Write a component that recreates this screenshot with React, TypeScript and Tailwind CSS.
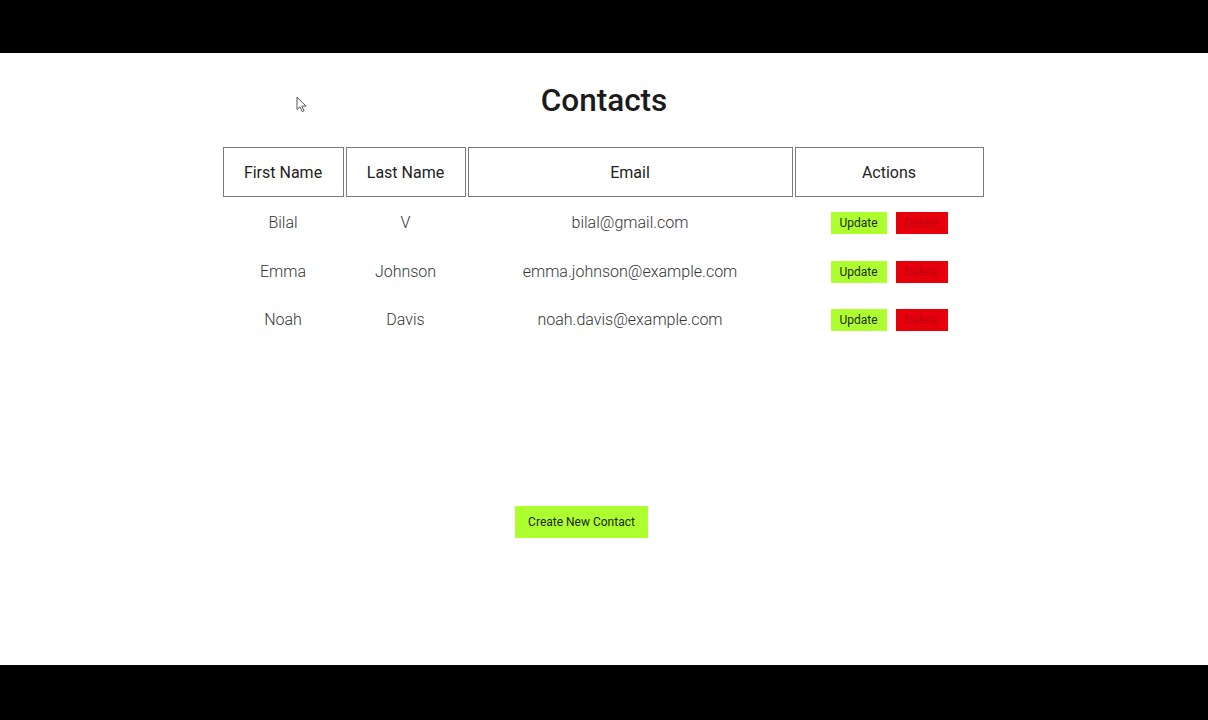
const CONTACTS = [
  { first: 'Bilal', last: 'V', email: 'bilal@gmail.com' },
  { first: 'Emma', last: 'Johnson', email: 'emma.johnson@example.com' },
  { first: 'Noah', last: 'Davis', email: 'noah.davis@example.com' },
];

function Cursor() {
  return (
    <svg
      className="absolute left-[296px] top-[96px]"
      width="12"
      height="17"
      viewBox="0 0 12 17"
    >
      <path
        d="M1 1 L1 13.5 L4 10.8 L6.2 15.6 L8 14.8 L5.9 10.1 L10 10.1 Z"
        fill="#fff"
        stroke="#555"
        strokeWidth="1"
        strokeLinejoin="round"
      />
    </svg>
  );
}

export default function App() {
  return (
    <div className="relative w-[1208px] h-[720px] bg-black font-['Roboto',sans-serif] overflow-hidden">
      <div className="h-[53px] bg-black" />
      <div className="h-[612px] bg-white flex flex-col items-center">
        <h1 className="mt-[30px] text-[31.5px] leading-[36px] font-medium text-[#1b1b1b]">Contacts</h1>

        {/* contact table */}
        <table className="mt-[26px] mr-[2px] border-separate border-spacing-[2px] text-[16px]">
          <thead>
            <tr>
              <th className="w-[121px] h-[50px] pt-[2px] border border-[#7a7a7a] font-normal text-[#222]">First Name</th>
              <th className="w-[120px] h-[50px] pt-[2px] border border-[#7a7a7a] font-normal text-[#222]">Last Name</th>
              <th className="w-[325px] h-[50px] pt-[2px] border border-[#7a7a7a] font-normal text-[#222]">Email</th>
              <th className="w-[189px] h-[50px] pt-[2px] border border-[#7a7a7a] font-normal text-[#222]">Actions</th>
            </tr>
          </thead>
          <tbody>
            {CONTACTS.map((c) => (
              <tr key={c.email}>
                <td className="h-[46.5px] pt-[2px] text-center font-light text-[#353535]">{c.first}</td>
                <td className="h-[46.5px] pt-[2px] text-center font-light text-[#353535]">{c.last}</td>
                <td className="h-[46.5px] pt-[2px] text-center font-light text-[#353535]">{c.email}</td>
                <td className="h-[46.5px] pt-[2px]">
                  <div className="flex justify-center gap-[9px]">
                    <button className="w-[56px] h-[22px] bg-[#adff2f] text-[12px] text-[#1f2a10]">Update</button>
                    <button className="w-[52px] h-[22px] bg-[#e6000c] text-[12px] text-[#c0000a]">Delete</button>
                  </div>
                </td>
              </tr>
            ))}
          </tbody>
        </table>

        <button className="mt-[161px] mr-[45px] w-[133px] h-[32px] bg-[#adff2f] text-[12px] text-[#1c2410]">
          Create New Contact
        </button>
      </div>
      <Cursor />
    </div>
  );
}
